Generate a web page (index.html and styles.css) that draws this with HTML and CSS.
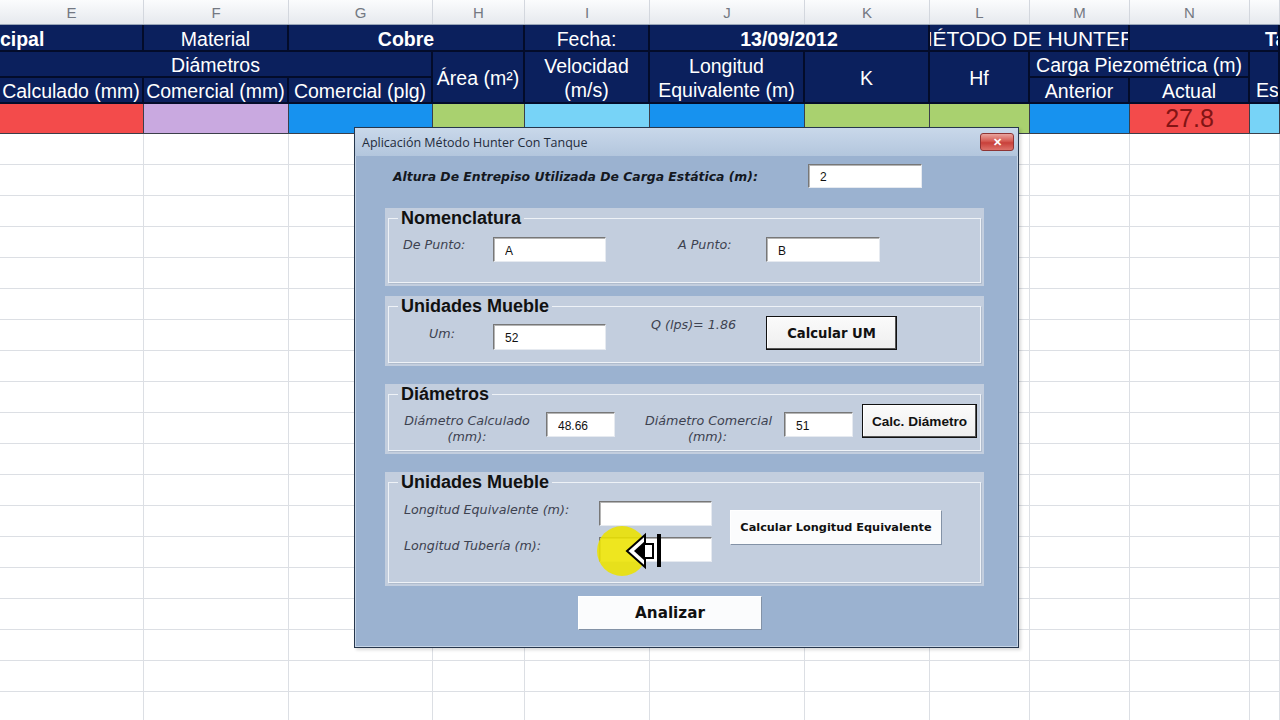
FILE: index.html
```html
<!DOCTYPE html>
<html lang="es">
<head>
    <meta charset="UTF-8">
    <meta name="viewport" content="width=device-width, initial-scale=1.0">
    <title>Método Hunter</title>
    <link rel="stylesheet" href="styles.css">
</head>
<body>
    <div class="sheet">
        <div class="letters">
            <div>E</div><div>F</div><div>G</div><div>H</div><div>I</div><div>J</div>
            <div>K</div><div>L</div><div>M</div><div>N</div><div></div>
        </div>

        <div class="band">
            <!-- fila 1 -->
            <div class="hd bold start"><span class="tail">Principal</span></div>
            <div class="hd">Material</div>
            <div class="hd bold span2">Cobre</div>
            <div class="hd">Fecha:</div>
            <div class="hd bold span2">13/09/2012</div>
            <div class="hd span2 wide">MÉTODO DE HUNTER</div>
            <div class="hd bold span2 start pad-ta">Tanque</div>
            <!-- fila 2 -->
            <div class="hd span3">Diámetros</div>
            <div class="hd rows2">Área (m²)</div>
            <div class="hd rows2 two">Velocidad<br>(m/s)</div>
            <div class="hd rows2 two">Longitud<br>Equivalente (m)</div>
            <div class="hd rows2">K</div>
            <div class="hd rows2">Hf</div>
            <div class="hd span2">Carga Piezométrica (m)</div>
            <div class="hd rows2 start low">Estática</div>
            <!-- fila 3 -->
            <div class="hd">Calculado (mm)</div>
            <div class="hd">Comercial (mm)</div>
            <div class="hd">Comercial (plg)</div>
            <div class="hd">Anterior</div>
            <div class="hd">Actual</div>
            <!-- fila de datos -->
            <div class="dc red"></div>
            <div class="dc lilac"></div>
            <div class="dc blue"></div>
            <div class="dc green"></div>
            <div class="dc cyan"></div>
            <div class="dc blue"></div>
            <div class="dc green"></div>
            <div class="dc green"></div>
            <div class="dc blue"></div>
            <div class="dc red value">27.8</div>
            <div class="dc cyan"></div>
        </div>

        <div class="grid">
            <div></div><div></div><div></div><div></div><div></div><div></div>
            <div></div><div></div><div></div><div></div><div></div>
        </div>
    </div>

    <div class="dialog">
        <div class="titlebar">
            <span>Aplicación Método Hunter Con Tanque</span>
            <button class="close">&#x2715;</button>
        </div>

        <div class="client">
            <div class="static-row">
                <span class="label-strong">Altura De Entrepiso Utilizada De Carga Estática (m):</span>
                <input type="text" class="txt w114 h24" value="2">
            </div>

            <div class="frame h78">
                <fieldset>
                    <legend>Nomenclatura</legend>
                    <div class="row mt10">
                        <span class="lbl ml14 w90">De Punto:</span>
                        <input type="text" class="txt w113" value="A">
                        <span class="lbl ml72 w88">A Punto:</span>
                        <input type="text" class="txt w114" value="B">
                    </div>
                </fieldset>
            </div>

            <div class="frame h70 mt10">
                <fieldset>
                    <legend>Unidades Mueble</legend>
                    <div class="row">
                        <span class="lbl ml40 w64 mt11">Um:</span>
                        <input type="text" class="txt w113 h26 mt9" value="52">
                        <span class="lbl ml45 w115 mt2">Q (lps)= 1.86</span>
                        <button class="btn dark w131 mt1">Calcular UM</button>
                    </div>
                </fieldset>
            </div>

            <div class="frame h70 mt18">
                <fieldset>
                    <legend>Diámetros</legend>
                    <div class="row">
                        <span class="lbl center ml15 w126 mt10">Diámetro Calculado<br>(mm):</span>
                        <input type="text" class="txt w69 ml16 mt9" value="48.66">
                        <span class="lbl center ml30 w125 mt10">Diámetro Comercial<br>(mm):</span>
                        <input type="text" class="txt w69 ml14 mt9" value="51">
                        <button class="btn dark narrow w115 ml9 mt1">Calc. Diámetro</button>
                    </div>
                </fieldset>
            </div>

            <div class="frame h114 mt18">
                <fieldset>
                    <legend>Unidades Mueble</legend>
                    <div class="row">
                        <div class="stack">
                            <div class="row mt10">
                                <span class="lbl ml15 w195 mt1">Longitud Equivalente (m):</span>
                                <input type="text" class="txt w113" value="">
                            </div>
                            <div class="row mt11">
                                <span class="lbl ml15 w195 mt1">Longitud Tubería (m):</span>
                                <input type="text" class="txt w113" value="">
                            </div>
                        </div>
                        <button class="btn flat small w212 h35 ml18 mt19">Calcular Longitud Equivalente</button>
                    </div>
                </fieldset>
            </div>

            <button class="btn flat big analizar">Analizar</button>
        </div>
    </div>

    <!-- puntero resaltado de la grabación -->
    <div class="pointer">
        <div class="halo"></div>
        <svg class="arrow" width="42" height="38" viewBox="0 0 42 38">
            <path d="M3 19 L21 3 L21 12 L29 12 L29 26 L21 26 L21 35 Z" fill="#fff" stroke="#000" stroke-width="2" stroke-linejoin="miter"/>
            <path d="M10 19 L21 9 L21 29 Z" fill="#000"/>
            <rect x="33" y="2" width="4" height="33" fill="#000"/>
        </svg>
    </div>
</body>
</html>
```

FILE: styles.css
```css
* {
    box-sizing: border-box;
}
body {
    margin: 0;
    width: 1280px;
    height: 720px;
    overflow: hidden;
    background: #fff;
    font-family: "Liberation Sans", Arial, sans-serif;
    position: relative;
}

/* ---------- hoja de cálculo ---------- */
.sheet {
    display: flex;
    flex-direction: column;
    height: 720px;
}
.letters,
.band,
.grid {
    display: grid;
    grid-template-columns: 144px 145px 144px 92px 125px 155px 125px 100px 100px 120px 1fr;
}
.letters {
    height: 25px;
    background: linear-gradient(#fbfcfd, #e6e9ee);
    border-bottom: 1px solid #9aa6b8;
}
.letters div {
    display: flex;
    align-items: center;
    justify-content: center;
    font-size: 15px;
    color: #737882;
    border-right: 1px solid #d3d7de;
}
.band {
    grid-template-rows: 27px 26px 26px 30px;
}
.hd {
    display: flex;
    align-items: center;
    justify-content: center;
    text-align: center;
    white-space: nowrap;
    overflow: hidden;
    padding-top: 2px;
    background: #0b205d;
    color: #fff;
    font-size: 19.5px;
    line-height: 24px;
    border-right: 2px solid #030c2a;
    border-bottom: 2px solid #030c2a;
}
.hd.bold {
    font-weight: bold;
}
.hd.start {
    justify-content: flex-start;
}
.hd.span2 {
    grid-column: span 2;
}
.hd.span3 {
    grid-column: span 3;
}
.hd.rows2 {
    grid-row: span 2;
}
.hd.wide {
    font-size: 21px;
    padding-right: 8px;
}
.hd.pad-ta {
    padding-left: 135px;
}
.hd.low {
    align-items: flex-end;
    padding: 0 0 0 6px;
}
.tail {
    margin-left: -38px;
}
.dc {
    border-right: 1px solid #3b3f4a;
    border-bottom: 1px solid #3b3f4a;
}
.red { background: #f34b4b; }
.lilac { background: #c9a9e0; }
.blue { background: #1792ef; }
.green { background: #a9d16f; }
.cyan { background: #77d3f7; }
.value {
    display: flex;
    align-items: center;
    justify-content: center;
    color: #821414;
    font-size: 25px;
}
.grid {
    flex: 1;
}
.grid div {
    border-right: 1px solid #dcdfe4;
    background: repeating-linear-gradient(to bottom, transparent 0, transparent 30px, #dcdfe4 30px, #dcdfe4 31px);
}

/* ---------- formulario ---------- */
.dialog {
    position: absolute;
    left: 354px;
    top: 127px;
    width: 665px;
    height: 521px;
    border: 1px solid #26364c;
    background: #9bb2d0;
    box-shadow: inset 0 0 0 1px #c6d5e7, 2px 2px 3px rgba(0, 0, 0, 0.15);
}
.titlebar {
    height: 28px;
    display: flex;
    align-items: center;
    justify-content: space-between;
    padding: 0 4px 0 7px;
    background: linear-gradient(#c9d8ea, #b3c6dd);
    font-family: "Open Sans", sans-serif;
    font-size: 12.5px;
    color: #1f2b3b;
}
.close {
    width: 34px;
    height: 18px;
    margin-top: -1px;
    padding: 0;
    border: 1px solid #8e3434;
    border-radius: 3px;
    background: linear-gradient(#e9a49e, #d55a52 45%, #c8403a 55%, #dd726a);
    color: #fff;
    font-size: 11px;
    font-weight: bold;
    line-height: 16px;
}
.client {
    display: flex;
    flex-direction: column;
    align-items: flex-start;
}
.static-row {
    display: flex;
    align-items: center;
    margin: 8px 0 0 38px;
}
.label-strong {
    width: 415px;
    font-family: "DejaVu Sans", sans-serif;
    font-size: 12.4px;
    font-weight: bold;
    font-style: italic;
    color: #14181f;
    white-space: nowrap;
}
.frame {
    width: 599px;
    margin-left: 30px;
    margin-top: 20px;
    padding: 1px 3px 3px;
    background: #c3cede;
}
.frame fieldset {
    height: 100%;
    margin: 0;
    padding: 0;
    border: 1px solid #eef2f7;
    box-shadow: 1px 1px 0 #b0bccd;
}
.frame legend {
    margin-left: 9px;
    padding: 0 3px;
    font-family: "Liberation Sans", Arial, sans-serif;
    font-size: 18px;
    line-height: 18px;
    font-weight: bold;
    color: #111;
}
.row {
    display: flex;
    align-items: flex-start;
}
.stack {
    display: flex;
    flex-direction: column;
}
.lbl {
    font-family: "DejaVu Sans", sans-serif;
    font-size: 12.7px;
    font-style: italic;
    line-height: 16px;
    color: #3d4250;
    white-space: nowrap;
}
.lbl.center {
    text-align: center;
}
.txt {
    height: 25px;
    padding: 2px 0 0 11px;
    border: 1px solid;
    border-color: #777 #e6eaf0 #e6eaf0 #777;
    box-shadow: inset 1px 1px 0 #b5b5b5;
    background: #fff;
    font-family: "Liberation Sans", Arial, sans-serif;
    font-size: 12px;
    color: #111;
    outline: none;
}
.btn {
    height: 34px;
    padding: 0;
    background: linear-gradient(#fbfbfb, #eeeeee);
    font-family: "DejaVu Sans", sans-serif;
    font-weight: bold;
    color: #111;
    white-space: nowrap;
    cursor: pointer;
}
.btn.dark {
    border: 1px solid #111;
    box-shadow: inset -1px -1px 0 #555, inset 1px 1px 0 #fff;
    font-size: 13.2px;
}
.btn.narrow {
    font-family: "Liberation Sans", Arial, sans-serif;
    font-size: 13.6px;
}
.btn.flat {
    border: 1px solid;
    border-color: #fff #8392a6 #8392a6 #fff;
    background: #fbfcfd;
}
.btn.small {
    font-size: 11.3px;
}
.btn.big {
    font-size: 15.2px;
}
.analizar {
    width: 184px;
    margin: 10px 0 0 223px;
}

/* medidas sueltas */
.w64 { width: 64px; }
.w69 { width: 69px; }
.w88 { width: 88px; }
.w90 { width: 90px; }
.w113 { width: 113px; }
.w114 { width: 114px; }
.w115 { width: 115px; }
.w125 { width: 125px; }
.w126 { width: 126px; }
.w131 { width: 131px; }
.w195 { width: 195px; }
.w212 { width: 212px; }
.h24 { height: 24px; }
.h26 { height: 26px; }
.h35 { height: 35px; }
.h70 { height: 70px; }
.h78 { height: 78px; }
.h114 { height: 114px; }
.ml9 { margin-left: 9px; }
.ml14 { margin-left: 14px; }
.ml15 { margin-left: 15px; }
.ml16 { margin-left: 16px; }
.ml18 { margin-left: 18px; }
.ml30 { margin-left: 30px; }
.ml40 { margin-left: 40px; }
.ml45 { margin-left: 45px; }
.ml72 { margin-left: 72px; }
.mt1 { margin-top: 1px; }
.mt2 { margin-top: 2px; }
.mt9 { margin-top: 9px; }
.mt10 { margin-top: 10px; }
.mt11 { margin-top: 11px; }
.mt18 { margin-top: 18px; }
.mt19 { margin-top: 19px; }

/* ---------- puntero ---------- */
.pointer {
    position: absolute;
    left: 596px;
    top: 526px;
    width: 70px;
    height: 50px;
    pointer-events: none;
}
.halo {
    position: absolute;
    left: 1px;
    top: 0;
    width: 50px;
    height: 50px;
    border-radius: 50%;
    background: rgba(236, 226, 0, 0.88);
}
.arrow {
    position: absolute;
    left: 28px;
    top: 6px;
}
```
